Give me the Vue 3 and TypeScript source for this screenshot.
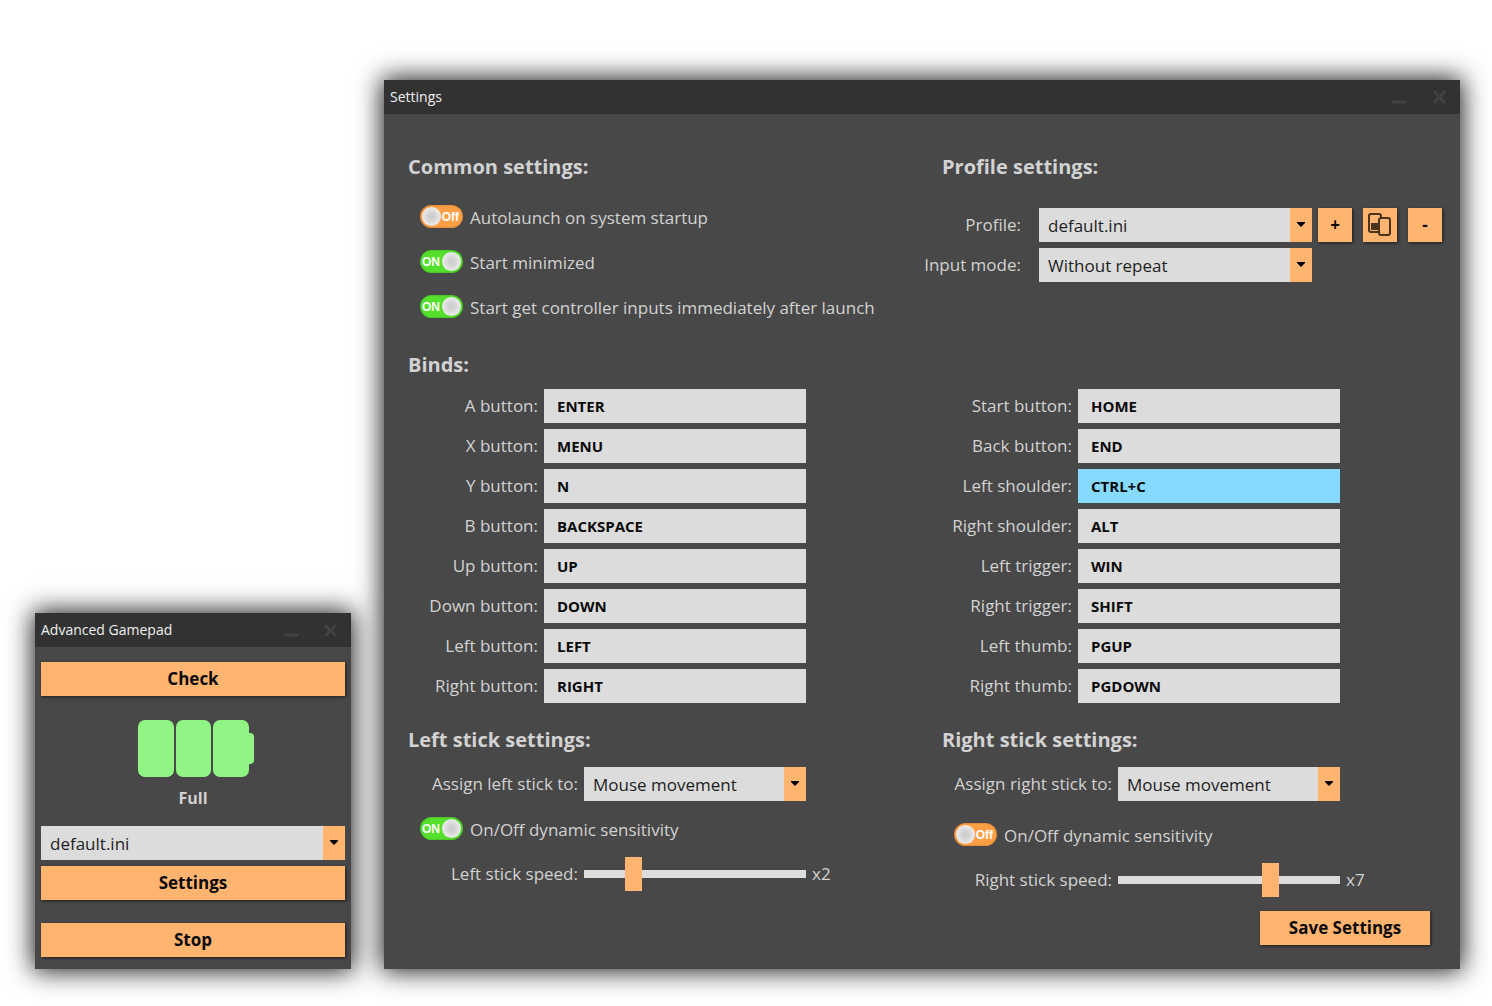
<script setup lang="ts">
import { ref, reactive } from 'vue'

interface Bind {
  id: string
  label: string
  value: string
  active?: boolean
}

interface Stick {
  id: string
  title: string
  assignLabel: string
  speedLabel: string
  target: string
  dynamic: boolean
  speed: number
}

const profiles = ['default.ini']
const inputModes = ['Without repeat', 'With repeat']
const stickTargets = ['Mouse movement', 'Mouse wheel', 'None']

const profile = ref('default.ini')
const inputMode = ref('Without repeat')

const toggles = reactive([
  { id: 'autolaunch', label: 'Autolaunch on system startup', on: false },
  { id: 'minimized', label: 'Start minimized', on: true },
  { id: 'immediate', label: 'Start get controller inputs immediately after launch', on: true },
])

const bindColumns = reactive<Bind[][]>([
  [
    { id: 'a', label: 'A button:', value: 'ENTER' },
    { id: 'x', label: 'X button:', value: 'MENU' },
    { id: 'y', label: 'Y button:', value: 'N' },
    { id: 'b', label: 'B button:', value: 'BACKSPACE' },
    { id: 'up', label: 'Up button:', value: 'UP' },
    { id: 'down', label: 'Down button:', value: 'DOWN' },
    { id: 'left', label: 'Left button:', value: 'LEFT' },
    { id: 'right', label: 'Right button:', value: 'RIGHT' },
  ],
  [
    { id: 'start', label: 'Start button:', value: 'HOME' },
    { id: 'back', label: 'Back button:', value: 'END' },
    { id: 'lsh', label: 'Left shoulder:', value: 'CTRL+C', active: true },
    { id: 'rsh', label: 'Right shoulder:', value: 'ALT' },
    { id: 'ltr', label: 'Left trigger:', value: 'WIN' },
    { id: 'rtr', label: 'Right trigger:', value: 'SHIFT' },
    { id: 'lth', label: 'Left thumb:', value: 'PGUP' },
    { id: 'rth', label: 'Right thumb:', value: 'PGDOWN' },
  ],
])

const sticks = reactive<Stick[]>([
  {
    id: 'left',
    title: 'Left stick settings:',
    assignLabel: 'Assign left stick to:',
    speedLabel: 'Left stick speed:',
    target: 'Mouse movement',
    dynamic: true,
    speed: 2,
  },
  {
    id: 'right',
    title: 'Right stick settings:',
    assignLabel: 'Assign right stick to:',
    speedLabel: 'Right stick speed:',
    target: 'Mouse movement',
    dynamic: false,
    speed: 7,
  },
])
</script>

<template>
  <div class="desktop">
    <section class="window launcher">
      <header class="titlebar">
        <span class="title">Advanced Gamepad</span>
        <button class="caption" type="button" aria-label="Minimize">
          <svg width="16" height="16" viewBox="0 0 16 16"><path d="M1 13h14" /></svg>
        </button>
        <button class="caption" type="button" aria-label="Close">
          <svg width="16" height="16" viewBox="0 0 16 16"><path d="M2 3l11 11M13 3L2 14" /></svg>
        </button>
      </header>
      <div class="launcher-body">
        <button class="btn" type="button">Check</button>
        <div class="battery">
          <svg width="122" height="58" viewBox="0 0 122 58" aria-hidden="true">
            <rect x="6" y="0" width="36" height="57" rx="7" />
            <rect x="44" y="0" width="35" height="57" rx="7" />
            <rect x="81" y="0" width="36" height="57" rx="7" />
            <rect x="110" y="13" width="12" height="31" rx="4" />
          </svg>
          <span class="level">Full</span>
        </div>
        <div class="combo">
          <select v-model="profile" aria-label="Active profile">
            <option v-for="p in profiles" :key="p">{{ p }}</option>
          </select>
          <span class="drop"><svg width="10" height="6" viewBox="0 0 10 6"><path d="M1 0h8v1L5 5 1 1z" /></svg></span>
        </div>
        <button class="btn" type="button">Settings</button>
        <button class="btn stop" type="button">Stop</button>
      </div>
    </section>

    <main class="window settings">
      <header class="titlebar">
        <span class="title">Settings</span>
        <button class="caption" type="button" aria-label="Minimize">
          <svg width="16" height="16" viewBox="0 0 16 16"><path d="M0 13h14" /></svg>
        </button>
        <button class="caption" type="button" aria-label="Close">
          <svg width="16" height="16" viewBox="0 0 16 16"><path d="M2 2l11 12M13 2L2 14" /></svg>
        </button>
      </header>

      <div class="settings-body">
        <div class="columns">
          <section>
            <h2>Common settings:</h2>
            <label v-for="t in toggles" :key="t.id" class="toggle common">
              <span class="switch">
                <input v-model="t.on" type="checkbox" />
                <span class="state" :class="{ on: t.on }">{{ t.on ? 'ON' : 'Off' }}</span>
              </span>
              <span>{{ t.label }}</span>
            </label>
          </section>

          <section>
            <h2>Profile settings:</h2>
            <div class="profile">
              <label for="profile">Profile:</label>
              <div class="combo">
                <select id="profile" v-model="profile">
                  <option v-for="p in profiles" :key="p">{{ p }}</option>
                </select>
                <span class="drop"><svg width="10" height="6" viewBox="0 0 10 6"><path d="M1 0h8v1L5 5 1 1z" /></svg></span>
              </div>
              <div class="tools">
                <button class="btn" type="button" aria-label="Add profile">+</button>
                <button class="btn" type="button" aria-label="Copy profile">
                  <svg class="copy" width="24" height="24" viewBox="0 0 24 24">
                    <path d="M13 4V3a2 2 0 0 0-2-2H3a2 2 0 0 0-2 2v14a2 2 0 0 0 2 2h7" />
                    <path class="fill" d="M3 10h8v7H3z" />
                    <rect x="11" y="5" width="11" height="17" rx="2" />
                  </svg>
                </button>
                <button class="btn" type="button" aria-label="Remove profile">-</button>
              </div>
              <label for="mode">Input mode:</label>
              <div class="combo">
                <select id="mode" v-model="inputMode">
                  <option v-for="m in inputModes" :key="m">{{ m }}</option>
                </select>
                <span class="drop"><svg width="10" height="6" viewBox="0 0 10 6"><path d="M1 0h8v1L5 5 1 1z" /></svg></span>
              </div>
            </div>
          </section>
        </div>

        <section class="binds">
          <h2>Binds:</h2>
          <div class="columns">
            <div v-for="(column, i) in bindColumns" :key="i" class="bind-list">
              <template v-for="b in column" :key="b.id">
                <label :for="'bind-' + b.id">{{ b.label }}</label>
                <input :id="'bind-' + b.id" v-model="b.value" type="text" :class="{ active: b.active }" />
              </template>
            </div>
          </div>
        </section>

        <div class="columns sticks">
          <section v-for="s in sticks" :key="s.id" :class="s.id">
            <h2>{{ s.title }}</h2>
            <div class="stick-row">
              <label :for="s.id + '-target'">{{ s.assignLabel }}</label>
              <div class="combo">
                <select :id="s.id + '-target'" v-model="s.target">
                  <option v-for="t in stickTargets" :key="t">{{ t }}</option>
                </select>
                <span class="drop"><svg width="10" height="6" viewBox="0 0 10 6"><path d="M1 0h8v1L5 5 1 1z" /></svg></span>
              </div>
            </div>
            <label class="toggle dynamic">
              <span class="switch">
                <input v-model="s.dynamic" type="checkbox" />
                <span class="state" :class="{ on: s.dynamic }">{{ s.dynamic ? 'ON' : 'Off' }}</span>
              </span>
              <span>On/Off dynamic sensitivity</span>
            </label>
            <div class="stick-row">
              <label :for="s.id + '-speed'">{{ s.speedLabel }}</label>
              <input :id="s.id + '-speed'" v-model.number="s.speed" type="range" min="0" max="10" />
              <output :for="s.id + '-speed'">x{{ s.speed }}</output>
            </div>
          </section>
        </div>

        <button class="btn save" type="button">Save Settings</button>
      </div>
    </main>
  </div>
</template>

<style>
body {
  margin: 0;
  background: #fff;
}
</style>

<style scoped>
.desktop {
  box-sizing: border-box;
  min-height: 100vh;
  padding: 32px 32px 37px 35px;
  display: flex;
  align-items: flex-end;
  gap: 33px;
  font-family: 'Open Sans', 'Noto Sans', sans-serif;
  font-size: 17px;
  line-height: 24px;
  color: #d2d2d2;
}

.window {
  background: #484848;
  box-shadow: 0 0 24px 2px rgba(0, 0, 0, 0.9);
}

.launcher {
  flex: 0 0 316px;
}

.settings {
  flex: 1;
  min-width: 0;
}

.titlebar {
  display: flex;
  align-items: center;
  height: 34px;
  padding: 0 12px 0 6px;
  gap: 24px;
  background: #323232;
  color: #f0f0f0;
  font-size: 14px;
  font-weight: 500;
}

.title {
  flex: 1;
}

.caption {
  display: flex;
  padding: 0;
  border: 0;
  background: none;
}

.caption svg {
  fill: none;
  stroke: #424242;
  stroke-width: 3;
}

.btn {
  height: 34px;
  padding: 0;
  border: 0;
  background: #ffb470;
  box-shadow: 1px 1px 3px rgba(0, 0, 0, 0.6);
  color: #0a0a0a;
  font: 700 17px/24px 'Open Sans', 'Noto Sans', sans-serif;
}

.launcher-body {
  display: flex;
  flex-direction: column;
  gap: 6px;
  padding: 15px 6px 12px;
}

.battery {
  display: flex;
  flex-direction: column;
  align-items: center;
  gap: 8px;
  padding: 18px 0 10px;
}

.battery svg {
  fill: #90f585;
}

.level {
  font-size: 16px;
  font-weight: 700;
}

.stop {
  margin-top: 17px;
}

.combo {
  display: grid;
  grid-template-columns: 1fr 22px;
}

.combo select {
  grid-area: 1 / 1 / 2 / 3;
  appearance: none;
  width: 100%;
  height: 34px;
  padding: 2px 32px 0 9px;
  border: 0;
  border-radius: 0;
  background: #dcdcdc;
  color: #1e1e1e;
  font: 400 17px/24px 'Open Sans', 'Noto Sans', sans-serif;
}

.drop {
  grid-area: 1 / 2;
  display: grid;
  place-items: center;
  background: #ffb470;
  pointer-events: none;
}

.settings-body {
  display: flex;
  flex-direction: column;
  padding: 39px 0 24px 24px;
}

.columns {
  display: grid;
  grid-template-columns: 534fr 518fr;
}

h2 {
  margin: 0;
  font-size: 20px;
  line-height: 28px;
  font-weight: 700;
}

.toggle {
  display: flex;
  align-items: center;
  gap: 7px;
  padding-left: 12px;
}

.common {
  height: 45px;
}

h2 + .common {
  margin-top: 14px;
}

.switch {
  display: grid;
  align-items: center;
  padding-bottom: 2px;
}

.switch input {
  grid-area: 1 / 1;
  appearance: none;
  display: flex;
  align-items: center;
  box-sizing: border-box;
  width: 43px;
  height: 23px;
  margin: 0;
  padding: 0 2px;
  border-radius: 12px;
  background: #ff9f45;
  box-shadow: inset 0 0 2px rgba(0, 0, 0, 0.4);
}

.switch input::before {
  content: '';
  width: 19px;
  height: 19px;
  border-radius: 50%;
  background: radial-gradient(#cfcfcf 20%, #ececec 70%);
}

.switch input:checked {
  justify-content: flex-end;
  background: #55e02d;
}

.state {
  grid-area: 1 / 1;
  padding: 0 4px 0 2px;
  color: #fff;
  font: 700 12px/16px 'Liberation Sans', Arial, sans-serif;
  text-align: right;
  pointer-events: none;
}

.state.on {
  text-align: left;
}

.profile {
  display: grid;
  grid-template-columns: 79px 273px auto;
  justify-content: start;
  align-items: center;
  row-gap: 6px;
  column-gap: 18px;
  margin-top: 27px;
}

.profile label {
  justify-self: end;
  white-space: nowrap;
}

.tools {
  display: flex;
  gap: 11px;
  margin-left: -12px;
}

.tools .btn {
  display: grid;
  place-items: center;
  width: 34px;
}

.copy {
  fill: none;
  stroke: #4a331d;
  stroke-width: 2;
}

.copy .fill {
  fill: #4a331d;
  stroke: none;
}

.binds {
  margin-top: 21px;
}

.bind-list {
  display: grid;
  grid-template-columns: 130px 262px;
  column-gap: 6px;
  row-gap: 6px;
  align-items: center;
  margin-top: 10px;
}

.bind-list label {
  text-align: right;
}

.bind-list input {
  box-sizing: border-box;
  width: 100%;
  height: 34px;
  padding: 0 13px;
  border: 0;
  background: #dcdcdc;
  color: #0a0a0a;
  font: 700 15px/24px 'Open Sans', 'Noto Sans', sans-serif;
}

.bind-list input.active {
  background: #87daff;
}

.sticks {
  margin-top: 23px;
}

.stick-row {
  display: grid;
  grid-template-columns: 170px 222px auto;
  justify-content: start;
  align-items: center;
  column-gap: 6px;
}

.stick-row label {
  text-align: right;
  white-space: nowrap;
}

h2 + .stick-row {
  margin-top: 13px;
}

.dynamic {
  margin: 16px 0 15px;
}

.right .dynamic {
  margin-top: 22px;
}

.stick-row input {
  appearance: none;
  width: 100%;
  height: 34px;
  margin: 0;
  background: none;
}

.stick-row input::-webkit-slider-runnable-track {
  height: 8px;
  background: #dcdcdc;
}

.stick-row input::-webkit-slider-thumb {
  appearance: none;
  width: 17px;
  height: 34px;
  margin-top: -13px;
  background: #ffb470;
}

.save {
  align-self: flex-end;
  width: 170px;
  margin: 14px 30px 0 0;
}
</style>
